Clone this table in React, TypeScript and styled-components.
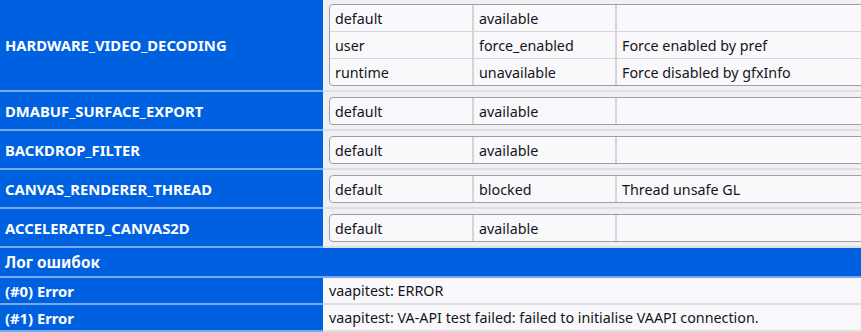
import React from "react";
import styled, { createGlobalStyle } from "styled-components";

const Global = createGlobalStyle`
  html, body {
    margin: 0;
    padding: 0;
    background: #f9f9fb;
    overflow: hidden;
  }
  body {
    font-family: "Noto Sans", "Open Sans", sans-serif;
    font-size: 14.3px;
    color: #15141a;
  }
`;

const Sheet = styled.div`
  width: 1100px;
  margin-top: -1px;
`;

const Row = styled.div`
  display: grid;
  grid-template-columns: 323px 1fr;
`;

const Name = styled.div`
  background: #0061e0;
  color: #ffffff;
  font-weight: 700;
  font-size: 14.8px;
  padding: 0 5px;
  display: flex;
  align-items: center;
  white-space: nowrap;
  border-bottom: 2px solid #79a8ec;
`;

const Holder = styled.div`
  background: #f0f0f4;
  padding: 5px 0 4px 6px;
  border-bottom: 2px solid #dedee4;
`;

const Inner = styled.div`
  border: 1px solid #9e9ea8;
  border-radius: 4px;
  background: #f9f9fb;
  overflow: hidden;
`;

const InnerRow = styled.div`
  display: grid;
  grid-template-columns: 142px 143px 1fr;
  height: 26px;
  & + & {
    border-top: 1px solid #d4d4da;
  }
`;

const InnerCell = styled.div`
  padding: 0 5px;
  display: flex;
  align-items: center;
  white-space: nowrap;
  & + & {
    border-left: 2px solid #d4d4da;
  }
`;

const Header = styled.div`
  background: #0061e0;
  color: #ffffff;
  font-weight: 700;
  font-size: 15.3px;
  height: 28px;
  padding: 0 5px;
  display: flex;
  align-items: center;
  border-bottom: 2px solid #79a8ec;
`;

const LogName = styled(Name)`
  height: 25px;
`;

const LogText = styled.div`
  background: #f9f9fb;
  padding: 0 6px;
  display: flex;
  align-items: center;
  white-space: nowrap;
  border-bottom: 2px solid #dedee4;
`;

type Status = [string, string, string];

const features: { name: string; rows: Status[] }[] = [
  {
    name: "HARDWARE_VIDEO_DECODING",
    rows: [
      ["default", "available", ""],
      ["user", "force_enabled", "Force enabled by pref"],
      ["runtime", "unavailable", "Force disabled by gfxInfo"],
    ],
  },
  { name: "DMABUF_SURFACE_EXPORT", rows: [["default", "available", ""]] },
  { name: "BACKDROP_FILTER", rows: [["default", "available", ""]] },
  {
    name: "CANVAS_RENDERER_THREAD",
    rows: [["default", "blocked", "Thread unsafe GL"]],
  },
  { name: "ACCELERATED_CANVAS2D", rows: [["default", "available", ""]] },
];

const errors = [
  ["(#0) Error", "vaapitest: ERROR"],
  [
    "(#1) Error",
    "vaapitest: VA-API test failed: failed to initialise VAAPI connection.",
  ],
];

export default function App() {
  return (
    <>
      <Global />
      <Sheet>
        {features.map((f) => (
          <Row key={f.name}>
            <Name>{f.name}</Name>
            <Holder>
              <Inner>
                {f.rows.map((r) => (
                  <InnerRow key={r[0]}>
                    {r.map((c, i) => (
                      <InnerCell key={i}>{c}</InnerCell>
                    ))}
                  </InnerRow>
                ))}
              </Inner>
            </Holder>
          </Row>
        ))}
        <Header>Лог ошибок</Header>
        {errors.map(([n, t]) => (
          <Row key={n}>
            <LogName>{n}</LogName>
            <LogText>{t}</LogText>
          </Row>
        ))}
      </Sheet>
    </>
  );
}
